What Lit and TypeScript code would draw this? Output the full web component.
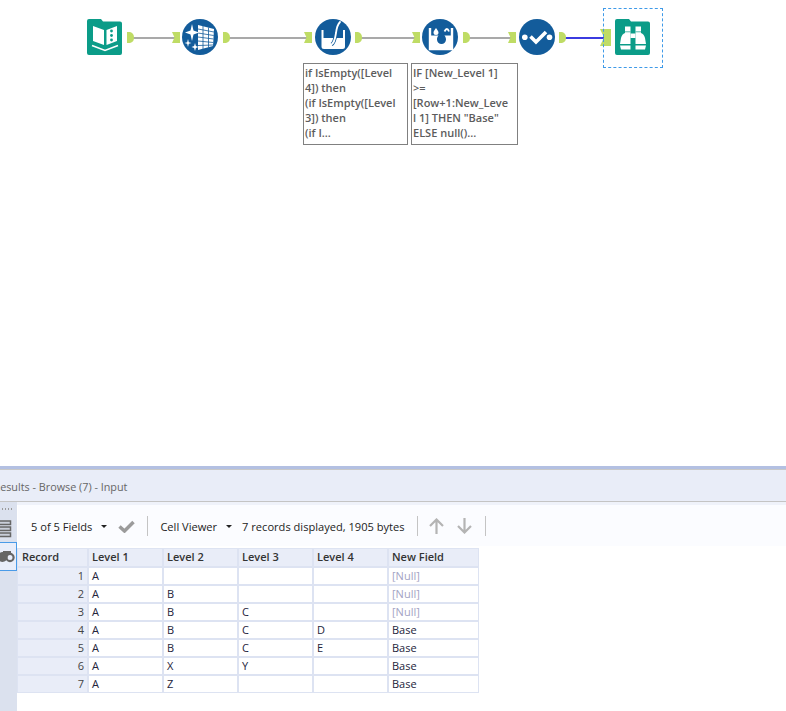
import { LitElement, html, css, svg } from "lit";
import { customElement } from "lit/decorators.js";

const TEAL = "#0b9c88";
const BLUE = "#135c9b";
const LIME = "#bfdc65";

const folder = svg`<path d="M2 0H14L16 2.5H33a2 2 0 0 1 2 2V34a2 2 0 0 1-2 2H2a2 2 0 0 1-2-2V2a2 2 0 0 1 2-2Z" fill=${TEAL} />`;

const icons = {
  book: svg`${folder}
    <path d="M6 7 17 11V26L6 22Z M19.5 11 30 7V22L19.5 26Z" fill="#fff" />
    <circle cx="24.5" cy="12" r="1.4" fill=${TEAL} /><circle cx="24.5" cy="16.5" r="1.4" fill=${TEAL} /><circle cx="24.5" cy="21" r="1.4" fill=${TEAL} />
    <path d="M5 26.5 18 31.5 31 26.5" fill="none" stroke="#fff" stroke-width="1.6" />`,
  sparkle: svg`<circle cx="18" cy="18" r="18" fill=${BLUE} />
    <path d="M16 6 32 10 31 27 16 31Z" fill="#fff" />
    <path d="M16 10 32 13M16 14 31.7 16.5M16 18 31.5 20M16 22 31.3 23.5M16 26.5 31 26M21 7V30M26.5 8.5V28.5" stroke=${BLUE} stroke-width="0.8" fill="none" />
    <path d="M10 5 11.5 11.5 17 13.5 11.5 15.5 10 22 8.5 15.5 3 13.5 8.5 11.5Z" fill="#fff" />
    <path d="M6 20 6.8 23.2 9.5 24 6.8 24.8 6 28 5.2 24.8 2.5 24 5.2 23.2Z" fill="#fff" />
    <path d="M13 24 13.9 27 16.5 28 13.9 29 13 32 12.1 29 9.5 28 12.1 27Z" fill="#fff" />`,
  formula: svg`<circle cx="18" cy="18" r="18" fill=${BLUE} />
    <path d="M7.500 11V27.500a1.500 1.500 0 0 0 1.500 1.500H27.500a1.500 1.500 0 0 0 1.500-1.500V11" fill="none" stroke="#fff" stroke-width="2" />
    <path d="M8 19H28.500V28.500H8Z" fill="#fff" />
    <path d="M16.500 25.500 Q19.500 24 21 14 Q22 6 25 3" fill="none" stroke=${BLUE} stroke-width="3.600" />
    <path d="M16.500 25.500 Q19.500 24 21 14 Q22 6 25 3" fill="none" stroke="#fff" stroke-width="1.800" stroke-linecap="round" />`,
  multiRow: svg`<circle cx="18" cy="18" r="18" fill=${BLUE} />
    <path d="M8 9V30H30V9" fill="none" stroke="#fff" stroke-width="2.400" />
    <path d="M8 16.500H30V30H8Z" fill="#fff" />
    <path d="M14 9C15.200 11 16.500 12 16.500 13.500A2.500 2.500 0 0 1 11.500 13.500C11.500 12 12.800 11 14 9Z" fill="#fff" />
    <path d="M19.500 11.500C21.500 15.500 24 17 24 20.500A4.500 4.500 0 0 1 15 20.500C15 17 17.500 15.500 19.500 11.500Z" fill=${BLUE} />
    <path d="M22.500 12.500Q25 7.500 27 12.500" fill="none" stroke="#fff" stroke-width="1.800" />`,
  check: svg`<circle cx="18" cy="18" r="18" fill=${BLUE} />
    <circle cx="5.800" cy="18.300" r="2.800" fill="#fff" /><circle cx="30.500" cy="18.300" r="2.800" fill="#fff" />
    <path d="M11.500 17.500 17 23 27 13" fill="none" stroke="#fff" stroke-width="3.600" />`,
  browse: svg`${folder}
    <path d="M10 7.500H15.500V25H5L6 19Q7 15 10 14Z M20.500 7.500H26V14Q29 15 30 19L31 25H20.500Z" fill="#fff" />
    <path d="M15.500 14.500H20.500V19H15.500Z" fill="#fff" />
    <path d="M10 12.800H15.500M20.500 12.800H26" stroke=${TEAL} stroke-width="0.7" fill="none" />
    <path d="M5 26.500H15.500V30.500H6Z M20.500 26.500H31L30 30.500H20.500Z" fill="#fff" />`,
};

type NodeDef = { x: number; icon: keyof typeof icons };

const nodes: NodeDef[] = [
  { x: 87, icon: "book" },
  { x: 182, icon: "sparkle" },
  { x: 315, icon: "formula" },
  { x: 422, icon: "multiRow" },
  { x: 519, icon: "check" },
  { x: 615, icon: "browse" },
];

// output anchor x, input anchor x of each connection
const wires = [
  { from: 127, to: 172 },
  { from: 223, to: 304 },
  { from: 355, to: 412 },
  { from: 463, to: 508 },
];

const annotations = [
  { x: 303, w: 105, lines: ["if IsEmpty([Level", "4]) then", "(if IsEmpty([Level", "3]) then", "(if I..."] },
  { x: 411, w: 107, lines: ["IF [New_Level 1]", ">=", "[Row+1:New_Leve", "l 1] THEN \"Base\"", "ELSE null()..."] },
];

const columns = ["Record", "Level 1", "Level 2", "Level 3", "Level 4", "New Field"];
const rows = [
  ["A", "", "", "", "[Null]"],
  ["A", "B", "", "", "[Null]"],
  ["A", "B", "C", "", "[Null]"],
  ["A", "B", "C", "D", "Base"],
  ["A", "B", "C", "E", "Base"],
  ["A", "X", "Y", "", "Base"],
  ["A", "Z", "", "", "Base"],
];

@customElement("app-root")
export class AppRoot extends LitElement {
  static styles = css`
    :host {
      display: block;
      width: 786px;
      height: 711px;
      overflow: hidden;
      background: #fff;
      font-family: "Open Sans", "Noto Sans", sans-serif;
      font-size: 11px;
      color: #222;
    }

    /* workflow canvas */
    .canvas {
      position: relative;
      height: 466px;
    }
    .node,
    .anchor,
    .wire,
    .selection,
    .note {
      position: absolute;
    }
    .node {
      top: 19px;
      width: 36px;
      height: 36px;
    }
    .anchor {
      top: 32px;
    }
    .anchor.big {
      left: 600px;
      top: 29px;
    }
    .wire {
      top: 37px;
      height: 2px;
      background: #a9a9a9;
    }
    .wire.active {
      left: 565px;
      width: 40px;
      background: #3b3be0;
    }
    .selection {
      left: 603px;
      top: 8px;
      width: 58px;
      height: 58px;
      border: 1px dashed #3f9ae8;
    }
    .note {
      top: 63px;
      height: 82px;
      box-sizing: border-box;
      padding: 1px 0 0 1px;
      border: 1px solid #808080;
      background: #fff;
      color: #5c5c5c;
      font-size: 11px;
      font-weight: 600;
      line-height: 15px;
      white-space: nowrap;
      overflow: hidden;
    }

    /* results panel */
    .panel {
      height: 245px;
      display: flex;
      flex-direction: column;
    }
    .rule {
      height: 3px;
      background: #b3c0e2;
    }
    .title {
      box-sizing: border-box;
      height: 33px;
      padding: 5px 0 0 0;
      background: #e9edf8;
      border-top: 1px solid #c8c8c8;
      border-bottom: 1px solid #c4c4c4;
      color: #666;
      font-size: 10.8px;
      line-height: 24px;
      text-indent: -6.500px;
      white-space: nowrap;
    }
    .body {
      flex: 1;
      display: flex;
      min-height: 0;
    }
    .side {
      width: 17px;
      flex: none;
      background: #dbe1ee;
      display: flex;
      flex-direction: column;
    }
    .grip {
      margin: 6px 0 0 1px;
      height: 2px;
      width: 11px;
      background-image: radial-gradient(circle, #9a9a9a 0.8px, transparent 1px);
      background-size: 3px 2px;
    }
    .side svg {
      display: block;
    }
    .list {
      margin-top: 10px;
    }
    .side-btn {
      box-sizing: border-box;
      margin-top: 4px;
      height: 29px;
      border: 1px solid #4a9be8;
      border-left: 0;
      background: #e9eefa;
      padding-top: 5px;
      overflow: hidden;
    }
    .main {
      flex: 1;
      padding-top: 3px;
      background: linear-gradient(#eff2fa 3px, #fff 3px);
    }
    .toolbar {
      box-sizing: border-box;
      height: 41px;
      margin-left: 1px;
      margin-bottom: 2px;
      display: flex;
      align-items: center;
      background: #fbfcff;
      padding: 1px 0 0 13px;
      color: #222;
      font-size: 11.100px;
      white-space: nowrap;
    }
    .caret {
      width: 0;
      height: 0;
      border: 3px solid transparent;
      border-top: 3px solid #222;
      border-bottom: 0;
      margin-left: 9px;
    }
    .sep {
      width: 1px;
      height: 20px;
      background: #c4c4c4;
    }
    .toolbar svg {
      display: block;
    }

    /* data grid */
    .grid {
      display: grid;
      grid-template-columns: 69px 73px 73px 73px 73px 89px;
      grid-template-rows: 17px repeat(7, 16px);
      gap: 2px;
      width: max-content;
      padding: 1px;
      background: #dde3f2;
      font-size: 11px;
      line-height: 16px;
    }
    .cell {
      background: #fff;
      padding-left: 3px;
      color: #24243a;
      white-space: nowrap;
    }
    .head {
      background: #e9edf8;
      font-weight: 600;
      color: #333;
    }
    .head:first-child {
      padding-left: 4px;
    }
    .num {
      background: #e9edf8;
      text-align: right;
      padding: 0 3px 0 0;
      color: #444;
    }
    .null {
      color: #a3a3c4;
    }
  `;

  private renderCanvas() {
    const outs = [...wires.map((w) => w.from), 559];
    const ins = wires.map((w) => w.to);
    return html`<div class="canvas">
      ${wires.map(
        (w) => html`<div class="wire" style="left:${w.from + 5}px;width:${w.to - w.from - 2}px"></div>`,
      )}
      <div class="wire active"></div>
      ${nodes.map(
        (n) => html`<svg class="node" style="left:${n.x}px" viewBox="0 0 36 36">${icons[n.icon]}</svg>`,
      )}
      ${outs.map(
        (x) => html`<svg class="anchor" style="left:${x}px" width="7" height="11" viewBox="0 0 7 11">
          <path d="M0 0H3Q7 1 7 5.500Q7 10 3 11H0Z" fill=${LIME} />
        </svg>`,
      )}
      ${ins.map(
        (x) => html`<svg class="anchor" style="left:${x}px" width="8" height="11" viewBox="0 0 8 11">
          <path d="M0 0H8V11H0L2.500 5.500Z" fill=${LIME} />
        </svg>`,
      )}
      <svg class="anchor big" width="12" height="17" viewBox="0 0 12 17">
        <path d="M0 0H11V17H0L4 8.500Z" fill=${LIME} />
      </svg>
      <div class="selection"></div>
      ${annotations.map(
        (a) => html`<div class="note" style="left:${a.x}px;width:${a.w}px">
          ${a.lines.map((l) => html`<div>${l}</div>`)}
        </div>`,
      )}
    </div>`;
  }

  private renderToolbar() {
    return html`<div class="toolbar">
      <span>5 of 5 Fields</span>
      <span class="caret"></span>
      <svg style="margin-left:11px" width="17" height="13" viewBox="0 0 17 13">
        <path d="M1.500 6.500 6.500 11 15.500 2" fill="none" stroke="#9b9b9b" stroke-width="3.500" />
      </svg>
      <span class="sep" style="margin-left:12px"></span>
      <span style="margin-left:12px">Cell Viewer</span>
      <span class="caret"></span>
      <span style="margin-left:10px">7 records displayed, 1905 bytes</span>
      <span class="sep" style="margin-left:12px"></span>
      <svg style="margin-left:10px" width="17" height="16" viewBox="0 0 17 16">
        <path d="M8.500 16V2M2 8 8.500 1.500 15 8" fill="none" stroke="#b4b4b4" stroke-width="2.200" />
      </svg>
      <svg style="margin-left:11px" width="17" height="16" viewBox="0 0 17 16">
        <path d="M8.500 0V14M2 8 8.500 14.500 15 8" fill="none" stroke="#b4b4b4" stroke-width="2.200" />
      </svg>
      <span class="sep" style="margin-left:12px"></span>
    </div>`;
  }

  private renderGrid() {
    return html`<div class="grid">
      ${columns.map((c) => html`<div class="cell head">${c}</div>`)}
      ${rows.map(
        (r, i) => html`<div class="cell num">${i + 1}</div>
          ${r.map((v) => html`<div class="cell ${v === "[Null]" ? "null" : ""}">${v}</div>`)}`,
      )}
    </div>`;
  }

  render() {
    return html`
      ${this.renderCanvas()}
      <div class="panel">
        <div class="rule"></div>
        <div class="title">Results - Browse (7) - Input</div>
        <div class="body">
          <div class="side">
            <div class="grip"></div>
            <svg class="list" width="12" height="18" viewBox="0 0 12 18">
              <path d="M-1 1H10.500V4.500H-1ZM-1 7H10.500V10.500H-1ZM-1 13H10.500V16.500H-1Z" stroke="#666" stroke-width="1.500" fill="#c9ced9" />
            </svg>
            <div class="side-btn">
              <svg width="15" height="15" viewBox="0 0 15 15">
                <circle cx="2.500" cy="9" r="5" fill="#666" />
                <circle cx="10" cy="9.500" r="3.600" fill="none" stroke="#666" stroke-width="2.200" />
                <path d="M3 3H11V7H3Z" fill="#666" />
              </svg>
            </div>
          </div>
          <div class="main">${this.renderToolbar()} ${this.renderGrid()}</div>
        </div>
      </div>
    `;
  }
}
